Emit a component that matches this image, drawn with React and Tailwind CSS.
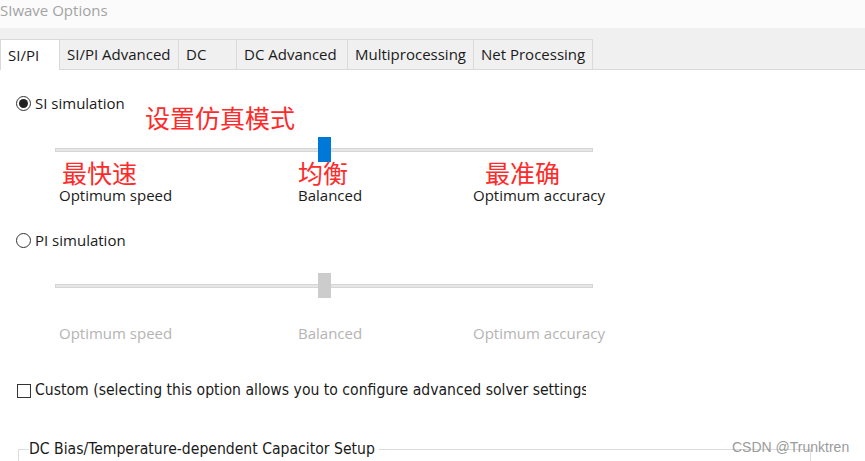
import React from "react";

const tabs = [
  { name: "SI/PI", w: "w-[60px]", active: true },
  { name: "SI/PI Advanced", w: "w-[119px]" },
  { name: "DC", w: "w-[58px]" },
  { name: "DC Advanced", w: "w-[111px]" },
  { name: "Multiprocessing", w: "w-[126px]" },
  { name: "Net Processing", w: "w-[119px]" },
];

function Radio({ checked }) {
  return (
    <span className="w-[15px] h-[15px] rounded-full border border-[#333] bg-white flex items-center justify-center shrink-0">
      {checked && <span className="w-[9px] h-[9px] rounded-full bg-[#222]" />}
    </span>
  );
}

function Slider({ thumb }) {
  return (
    <div className="relative ml-[55px] w-[538px] h-[26px] flex items-center">
      <div className="w-full h-[4px] bg-[#e6e6e6] border border-[#d6d6d6]" />
      <div className={`absolute left-[263px] top-0 w-[13px] h-[25px] ${thumb}`} />
    </div>
  );
}

function Labels({ dim }) {
  const c = dim ? "text-[#b4b4b4]" : "text-[#1a1a1a]";
  return (
    <div className={`flex text-[15px] leading-[18px] ${c}`}>
      <span className="ml-[59px] w-[239px]">Optimum speed</span>
      <span className="w-[175px]">Balanced</span>
      <span>Optimum accuracy</span>
    </div>
  );
}

export default function App() {
  const ui = "font-['Open_Sans','Noto_Sans_CJK_SC',sans-serif]";
  const zh = "font-['Noto_Sans_CJK_SC',sans-serif]";
  const narrow = "font-['DejaVu_Sans_Condensed',sans-serif]";
  return (
    <div className={`relative w-[865px] h-[461px] bg-white overflow-hidden ${ui}`}>
      {/* title */}
      <div className="h-[28px] bg-[#fbfbfb] text-[15px] leading-[20px] text-[#a3a3a3]">SIwave Options</div>

      {/* tab strip */}
      <div className="h-[42px] bg-[#f0f0f0] flex items-end border-b border-[#d9d9d9]">
        {tabs.map((t) => (
          <div
            key={t.name}
            className={`${t.w} flex items-center pl-[7px] text-[15px] text-[#1a1a1a] border border-b-0 ${
              t.active ? "bg-white border-[#d9d9d9] h-[31px] -mb-[1px]" : "h-[30px] bg-[#f0f0f0] border-[#dadada] border-l-0"
            }`}
          >
            {t.name}
          </div>
        ))}
      </div>

      {/* SI simulation */}
      <div className="flex items-center gap-[4px] ml-[16px] mt-[25px] h-[16px] text-[15px] text-[#1a1a1a]">
        <Radio checked />
        <span>SI simulation</span>
      </div>
      <div className="mt-[26px]">
        <Slider thumb="bg-[#0078d7]" />
      </div>
      <div className="mt-[23px]">
        <Labels />
      </div>

      {/* PI simulation */}
      <div className="flex items-center gap-[4px] ml-[16px] mt-[28px] h-[16px] text-[15px] text-[#1a1a1a]">
        <Radio />
        <span>PI simulation</span>
      </div>
      <div className="mt-[25px]">
        <Slider thumb="bg-[#cccccc]" />
      </div>
      <div className="mt-[25px]">
        <Labels dim />
      </div>

      {/* custom */}
      <div className={`flex items-center gap-[4px] ml-[17px] mt-[40px] h-[18px] text-[15.6px] text-[#1a1a1a] ${narrow}`}>
        <span className="w-[14px] h-[14px] border border-[#333] bg-white shrink-0" />
        <span className="w-[551px] overflow-hidden whitespace-nowrap">Custom (selecting this option allows you to configure advanced solver settings)</span>
      </div>

      {/* group box */}
      <div className="ml-[18px] mt-[49px] w-[793px] h-[40px] border-l border-r border-t border-[#dcdcdc] relative">
        <span className={`absolute -top-[10px] left-[10px] bg-white pr-[4px] text-[15.6px] leading-[18px] text-[#1a1a1a] ${narrow}`}>
          DC Bias/Temperature-dependent Capacitor Setup
        </span>
      </div>

      {/* annotations */}
      <span className={`absolute left-[145px] top-[105px] text-[25px] leading-[24px] text-[#ff2a2a] ${zh}`}>设置仿真模式</span>
      <span className={`absolute left-[62px] top-[160px] text-[25px] leading-[24px] text-[#ff2a2a] ${zh}`}>最快速</span>
      <span className={`absolute left-[298px] top-[160px] text-[25px] leading-[24px] text-[#ff2a2a] ${zh}`}>均衡</span>
      <span className={`absolute left-[485px] top-[160px] text-[25px] leading-[24px] text-[#ff2a2a] ${zh}`}>最准确</span>

      {/* watermark */}
      <span className="absolute left-[732px] top-[437px] text-[14px] text-[#9a9a9a] font-['Liberation_Sans',sans-serif]">CSDN @Trunktren</span>
    </div>
  );
}
